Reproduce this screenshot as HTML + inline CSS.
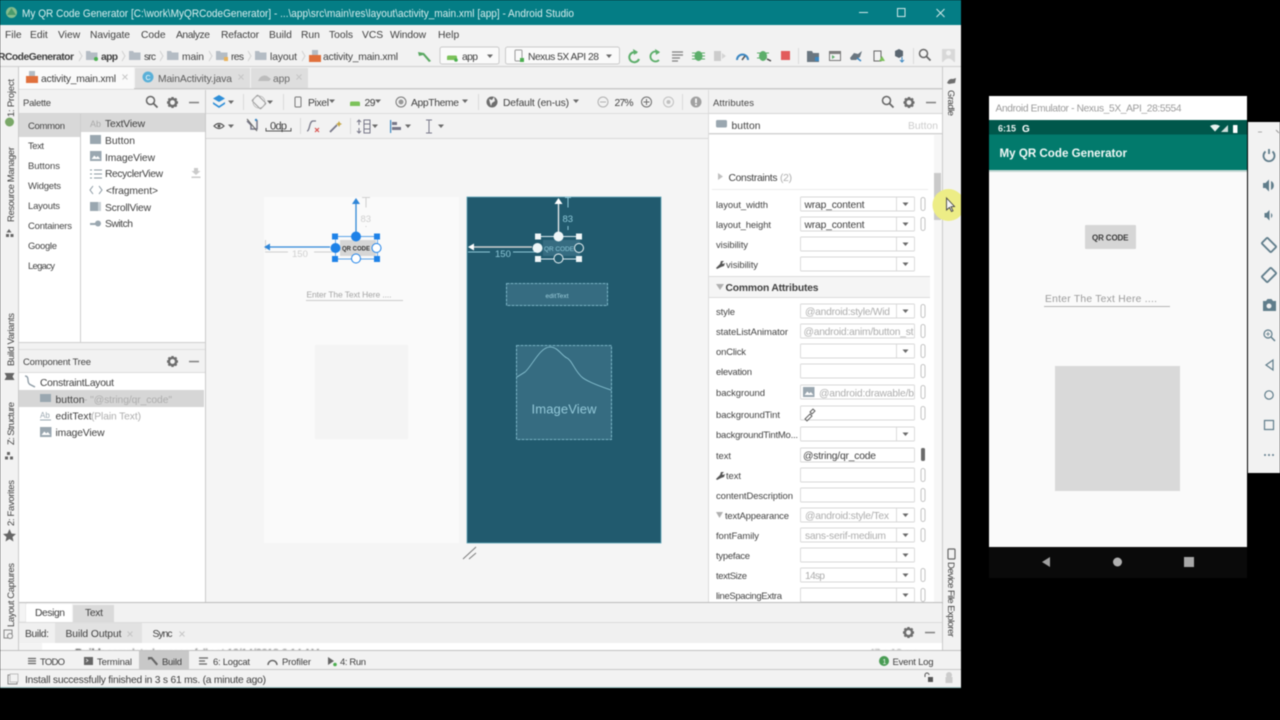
<!DOCTYPE html>
<html><head><meta charset="utf-8"><title>Android Studio</title>
<style>
html,body{margin:0;padding:0;background:#000;width:1280px;height:720px;overflow:hidden}
svg{display:block;position:absolute;left:0;top:0;filter:blur(.4px)}
text{font-family:"Liberation Sans",sans-serif;font-size:10.300px;fill:#3f3f3f}
.g{fill:#adadad}.l{fill:#444;font-size:9.500px}.f{fill:#adadad;font-size:10.300px}
</style></head><body>
<svg width="1280" height="720" viewBox="0 0 1280 720" xmlns="http://www.w3.org/2000/svg">
<defs>
<clipPath id="ideclip"><rect x="0" y="0" width="961" height="688"/></clipPath>
<g id="gear"><circle cx="0" cy="0" r="3.600" fill="none" stroke="#6e6e6e" stroke-width="2.400"/><path d="M-1.200-5.500h2.400v2h-2.400zM-1.200 3.500h2.400v2h-2.400zM-5.500-1.200v2.400h2v-2.400zM3.500-1.200v2.400h2v-2.400zM-4.800-3.200l1.600-1.600 1.500 1.500-1.600 1.600zM3.200-4.800l1.600 1.600-1.500 1.500-1.600-1.600zM-4.800 3.200l1.600 1.600 1.500-1.500-1.600-1.600zM3.200 4.800l1.600-1.600-1.500-1.500-1.600 1.600z" fill="#6e6e6e"/></g>
<g id="mag"><circle cx="-1.500" cy="-1.500" r="4" fill="none" stroke="#666" stroke-width="1.500"/><path d="M1.500 1.500L5.500 5.500" stroke="#666" stroke-width="1.800"/></g>
<g id="min"><rect x="-5" y="-.7" width="10" height="1.500" fill="#808080"/></g>
<g id="fold"><path d="M0 0h4l1 1.500h6.500v7.500H0z" fill="#b4bcc4"/></g>
<g id="img"><rect x="0" y="0" width="11.500" height="10" fill="#9aa7b0"/><path d="M1.500 8l2.800-3.500 2 2 1.500-1.500 2.500 3z" fill="#fff"/></g>
<g id="dd"><path d="M-3-1.500h6l-3 3.500z" fill="#6a6a6a"/></g>
<g id="pill"><rect x="-2" y="-6.500" width="4" height="13" rx="2" fill="#fff" stroke="#b4b4b4" stroke-width=".8"/></g>
<g id="xx"><path d="M-2.500-2.500l5 5M2.500-2.500l-5 5" stroke="#c4c4c4" stroke-width=".9"/></g>
<g id="bot"><path d="M-5 3v-3q0-1.500 1.500-1.500h7q1.500 0 1.500 1.500v3z" fill="#7cc25a"/></g>
</defs>

<!-- IDE base -->
<rect x="0" y="0" width="961" height="688" fill="#f2f2f2"/>
<rect x="0" y="0" width="961" height="25" fill="#047d85"/>
<circle cx="11.500" cy="12.500" r="5.500" fill="#86bd8e"/><path d="M7 15l4.500-7 4.500 7z" fill="#4a9a6c"/>
<text x="22" y="17" style="font-size:10.800px;fill:#d8eeee" textLength="552" lengthAdjust="spacingAndGlyphs">My QR Code Generator [C:\work\MyQRCodeGenerator] - ...\app\src\main\res\layout\activity_main.xml [app] - Android Studio</text>
<path d="M859 12.500h9" stroke="#cfe8e8" stroke-width="1"/><rect x="897.500" y="8.500" width="7.500" height="8" fill="none" stroke="#cfe8e8"/><path d="M936.500 9l8 8M944.500 9l-8 8" stroke="#cfe8e8"/>

<!-- Menu -->
<text x="5" y="38">File</text><text x="30" y="38">Edit</text><text x="58" y="38">View</text><text x="90" y="38" textLength="40">Navigate</text><text x="141" y="38">Code</text><text x="176" y="38" textLength="34">Analyze</text><text x="221" y="38" textLength="38">Refactor</text><text x="269" y="38">Build</text><text x="301" y="38">Run</text><text x="329" y="38">Tools</text><text x="362" y="38">VCS</text><text x="390" y="38" textLength="36">Window</text><text x="438" y="38">Help</text>

<!-- Navbar -->
<rect x="0" y="44" width="961" height="22" fill="#f2f2f2"/>
<rect x="0" y="66" width="961" height="1" fill="#cfcfcf"/>
<text x="-2" y="60" style="font-weight:bold" textLength="76">RCodeGenerator</text>
<path d="M79 51l3 5-3 5" fill="none" stroke="#d0d0d0"/>
<use href="#fold" x="86" y="51"/><circle cx="96" cy="59" r="2" fill="#4caf50"/><text x="101" y="60" style="font-weight:bold" textLength="17">app</text>
<path d="M122 51l3 5-3 5" fill="none" stroke="#d0d0d0"/>
<use href="#fold" x="129" y="51"/><text x="144" y="60" textLength="12">src</text>
<path d="M160 51l3 5-3 5" fill="none" stroke="#d0d0d0"/>
<use href="#fold" x="167" y="51"/><text x="182" y="60" textLength="22">main</text>
<path d="M209 51l3 5-3 5" fill="none" stroke="#d0d0d0"/>
<use href="#fold" x="216" y="51"/><rect x="224" y="57" width="4" height="4" fill="#e8b25c"/><text x="231" y="60" textLength="13">res</text>
<path d="M248 51l3 5-3 5" fill="none" stroke="#d0d0d0"/>
<use href="#fold" x="255" y="51"/><text x="270" y="60" textLength="27">layout</text>
<path d="M302 51l3 5-3 5" fill="none" stroke="#d0d0d0"/>
<rect x="309" y="55" width="12" height="7" fill="#e0703c"/><rect x="312" y="50" width="6" height="5" fill="#b4bcc4"/>
<text x="323" y="60" textLength="75">activity_main.xml</text>
<path d="M418 52l6 1 7 8-2 1-6-7-4 1z" fill="#5aa862"/>
<rect x="440" y="47" width="59" height="17" rx="2" fill="#fafafa" stroke="#cacaca"/>
<use href="#bot" x="452" y="57"/><circle cx="456" cy="60" r="1.800" fill="#4caf50"/>
<text x="462" y="60" textLength="16">app</text><use href="#dd" x="490" y="56"/>
<rect x="505.500" y="47" width="114" height="17" rx="2" fill="#fafafa" stroke="#cacaca"/>
<rect x="515" y="50" width="7" height="11" rx="1" fill="none" stroke="#999"/><rect x="520" y="58" width="4" height="4" fill="#4caf50"/>
<text x="528" y="60" textLength="71">Nexus 5X API 28</text><use href="#dd" x="609" y="56"/>
<path d="M637 53a5 5 0 1 0 2 6" fill="none" stroke="#5cae6a" stroke-width="2"/><path d="M633 49l5 3-4 3z" fill="#5cae6a"/>
<path d="M659 53a5 5 0 1 0 0 7" fill="none" stroke="#5cae6a" stroke-width="1.800"/><path d="M655 49l5 3-4 3z" fill="#5cae6a"/>
<path d="M672 52h11M672 55h11M672 58h8M672 61h6" stroke="#808080" stroke-width="1.200"/>
<ellipse cx="698.500" cy="56" rx="4" ry="5" fill="#5cae6a"/><path d="M692 53h13M692 56h13M692 59h13" stroke="#5cae6a"/>
<rect x="714" y="51" width="7" height="10" fill="#cccccc"/><path d="M722 53l4 3-4 3z" fill="#d4d4d4"/>
<path d="M737 60a5.500 5.500 0 0 1 11 0" fill="none" stroke="#3b87c2" stroke-width="2"/><path d="M742 60l3-4" stroke="#555" stroke-width="1.500"/>
<ellipse cx="763" cy="56" rx="4" ry="5" fill="#5cae6a"/><path d="M757 53h12M757 58h10" stroke="#5cae6a"/><path d="M767 59l4 2" stroke="#444" stroke-width="1.500"/>
<rect x="781" y="51" width="9" height="9" fill="#e25c5c"/>
<rect x="798" y="48" width="1" height="16" fill="#dadada"/>
<path d="M807 51h5l1 2h6v9h-12z" fill="#6a7680"/><rect x="815" y="57" width="4" height="4" fill="#3b87c2"/>
<rect x="829.500" y="51.500" width="11" height="9" fill="none" stroke="#777"/><rect x="830" y="52" width="10" height="2" fill="#808080"/><path d="M832 55l3 2-3 2z" fill="#5cae6a"/>
<path d="M850 58l4-5 4 1 4-3-2 6-4 3h-5z" fill="#6a7680"/><path d="M857 58l4 3" stroke="#3b87c2" stroke-width="1.500"/>
<rect x="874" y="51" width="7" height="10" fill="none" stroke="#666"/><path d="M877 62l3-5 3 5z" fill="#7cc25a" transform="translate(2,-1)"/>
<path d="M895 51l4-2 4 2v5l-4 2-4-2z" fill="#5a6670"/><path d="M902 57v5m-2-2l2 2 2-2" stroke="#3b87c2" fill="none"/>
<rect x="913" y="48" width="1" height="16" fill="#dadada"/>
<use href="#mag" x="925" y="55"/>
<rect x="942" y="49" width="13" height="13" fill="#d8d8d8"/><circle cx="948.500" cy="53" r="2.500" fill="#f2f2f2"/><path d="M943 62q5.500-7 11 0z" fill="#f2f2f2"/>

<!-- Left strip -->
<rect x="18" y="67" width="1" height="584" fill="#cacaca"/>
<text transform="translate(14,117) rotate(-90)" style="font-size:9.500px" textLength="38">1: Project</text>
<circle cx="9.500" cy="122" r="4.500" fill="#7aa868"/>
<text transform="translate(14,222) rotate(-90)" style="font-size:9.500px" textLength="75">Resource Manager</text>
<path d="M9 229l2.500 3.500h-5zM6 234h3v3H6zM10.500 234h3v3h-3z" fill="#666"/>
<text transform="translate(14,366) rotate(-90)" style="font-size:9.500px" textLength="53">Build Variants</text>
<path d="M4.500 373h10l-2 3.500 2 3.500h-10l2-3.500z" fill="#666"/>
<text transform="translate(14,445) rotate(-90)" style="font-size:9.500px" textLength="43">Z: Structure</text>
<path d="M7 452h3v3H7zM5 456.500h3v3H5zM10 456.500h3v3h-3z" fill="#666"/>
<text transform="translate(14,526) rotate(-90)" style="font-size:9.500px" textLength="46">2: Favorites</text>
<path d="M9.500 529l2 4.500 4.500.5-3.500 3 1 4.500-4-2.500-4 2.500 1-4.500-3.500-3 4.500-.5z" fill="#666"/>
<text transform="translate(14,627) rotate(-90)" style="font-size:9.500px" textLength="64">Layout Captures</text>
<rect x="4" y="630" width="8" height="8" fill="none" stroke="#888"/><circle cx="10" cy="636" r="2.500" fill="#f2f2f2" stroke="#888"/>

<!-- Tabs -->
<rect x="19" y="67" width="924" height="21" fill="#f2f2f2"/>
<rect x="135" y="68" width="115" height="20" fill="#dedede"/>
<rect x="251" y="68" width="57" height="20" fill="#dedede"/>
<rect x="19" y="88" width="924" height="1.500" fill="#cacaca"/>
<rect x="19" y="67" width="115" height="22" fill="#fafafa"/>
<rect x="26" y="76" width="12" height="7" fill="#e0703c"/><rect x="29" y="71" width="6" height="5" fill="#b4bcc4"/>
<text x="41" y="82" textLength="75">activity_main.xml</text><use href="#xx" x="125" y="77"/>
<circle cx="148" cy="77" r="5.500" fill="#5ab0d8"/><text x="145.500" y="80" style="font-size:7px;fill:#fff">C</text>
<text x="158" y="82" style="fill:#5a5a5a" textLength="74">MainActivity.java</text><use href="#xx" x="241" y="77"/>
<path d="M258 81q3-7 9-5l4 3-2 2z" fill="#bcbcbc"/><text x="273" y="82" style="fill:#6a6a6a" textLength="17">app</text><use href="#xx" x="299" y="77"/>

<!-- Palette -->
<rect x="19" y="90" width="186" height="24" fill="#f2f2f2"/>
<rect x="19" y="113" width="186" height="1" fill="#d4d4d4"/>
<rect x="19" y="114" width="186" height="228" fill="#fff"/>
<rect x="19" y="114" width="61" height="23" fill="#d8d8d8"/>
<rect x="81" y="114" width="124" height="18" fill="#d8d8d8"/>
<rect x="80" y="114" width="1" height="228" fill="#cecece"/>
<rect x="205" y="90" width="1" height="512" fill="#cacaca"/>
<text x="23" y="106" class="l" textLength="28">Palette</text>
<use href="#mag" x="152" y="102"/><use href="#gear" x="172.500" y="102.500"/><use href="#min" x="194" y="102.500"/>
<text x="28" y="129" class="l" textLength="37">Common</text>
<text x="28" y="149" class="l" textLength="16">Text</text>
<text x="28" y="169" class="l" textLength="32">Buttons</text>
<text x="28" y="189" class="l" textLength="33">Widgets</text>
<text x="28" y="209" class="l" textLength="32">Layouts</text>
<text x="28" y="229" class="l" textLength="44">Containers</text>
<text x="28" y="249" class="l" textLength="29">Google</text>
<text x="28" y="269" class="l" textLength="27">Legacy</text>
<text x="90" y="127" style="font-size:9px;fill:#aaa">Ab</text><text x="105" y="127" textLength="40">TextView</text>
<rect x="90" y="135" width="11" height="9" fill="#9aa7b0"/><text x="105" y="144" textLength="30">Button</text>
<use href="#img" x="90" y="151"/><text x="105" y="161" textLength="50">ImageView</text>
<path d="M90 170h2M90 174h2M90 178h2M94 170h8M94 174h8M94 178h8" stroke="#8a98a2"/><text x="105" y="177" textLength="58">RecyclerView</text>
<path d="M93 186l-3 4 3 4M99 186l3 4-3 4" fill="none" stroke="#8a98a2"/><text x="106" y="194" textLength="52">&lt;fragment&gt;</text>
<rect x="90" y="202" width="11" height="9" fill="#9aa7b0"/><rect x="98" y="202" width="3" height="9" fill="#c8d0d6"/><text x="105" y="211" textLength="46">ScrollView</text>
<path d="M90 224h8" stroke="#9aa7b0" stroke-width="2"/><circle cx="98" cy="223.500" r="3" fill="#9aa7b0"/><text x="105" y="227" textLength="28">Switch</text>
<path d="M194 168h4v3h2.500l-4.500 4-4.500-4h2.500zM191.500 176.500h9v1.500h-9z" fill="#cacaca"/>

<!-- Component tree -->
<rect x="19" y="342" width="186" height="1" fill="#cecece"/>
<rect x="19" y="343" width="186" height="6" fill="#f2f2f2"/>
<rect x="19" y="349" width="186" height="1" fill="#e0e0e0"/>
<rect x="19" y="350" width="186" height="22" fill="#f2f2f2"/>
<rect x="19" y="372" width="186" height="1" fill="#dcdcdc"/>
<rect x="19" y="373" width="186" height="229" fill="#fff"/>
<text x="23" y="365" class="l" textLength="68">Component Tree</text>
<use href="#gear" x="172.500" y="361.500"/><use href="#min" x="194" y="361.500"/>
<path d="M25 376q3 0 3 4t3 5q2 1 4 2" fill="none" stroke="#8a98a2" stroke-width="1.300"/>
<text x="40" y="386" textLength="74">ConstraintLayout</text>
<rect x="19" y="390" width="185" height="17" fill="#d6d6d6"/>
<rect x="40" y="394" width="11" height="8" fill="#9aa7b0"/>
<text x="55.500" y="403" textLength="29">button</text><text x="84" y="403" class="g" textLength="88">- "@string/qr_code"</text>
<text x="40" y="418" style="font-size:8px;fill:#9aa7b0">Ab</text><path d="M40 420h11" stroke="#9aa7b0"/>
<text x="55.500" y="419.500" textLength="36">editText</text><text x="91" y="419.500" class="g" textLength="50">(Plain Text)</text>
<use href="#img" x="40" y="427"/><text x="55.500" y="436" textLength="49">imageView</text>

<!-- Canvas -->
<rect x="206" y="90" width="503" height="512" fill="#f5f5f5"/>
<rect x="206" y="90" width="503" height="48" fill="#f2f2f2"/>
<rect x="206" y="113" width="503" height="1" fill="#dcdcdc"/>
<rect x="206" y="138" width="503" height="1" fill="#d8d8d8"/>
<path d="M219 95l6 3.500-6 3.500-6-3.500z" fill="#2f8fd8"/><path d="M213 102l6 4 6-4v2l-6 4-6-4z" fill="#2f8fd8"/>
<use href="#dd" x="231" y="102"/>
<rect x="243" y="94" width="1" height="16" fill="#dadada"/>
<g transform="rotate(-45 259 102)"><rect x="255" y="96" width="8" height="12" rx="1" fill="none" stroke="#999"/></g><circle cx="259" cy="102" r="6" fill="none" stroke="#b0b0b0" stroke-width=".7"/>
<use href="#dd" x="270" y="102"/>
<rect x="283" y="94" width="1" height="16" fill="#dadada"/>
<rect x="295" y="97" width="6" height="10" rx="1" fill="none" stroke="#777"/>
<text x="308" y="106" textLength="21">Pixel</text><use href="#dd" x="332" y="101"/>
<use href="#bot" x="355" y="103"/>
<text x="364.500" y="106" textLength="11">29</text><use href="#dd" x="378" y="101"/>
<circle cx="401" cy="102" r="5" fill="none" stroke="#777"/><circle cx="401" cy="102" r="2.500" fill="#999"/>
<text x="411" y="106" textLength="48">AppTheme</text><use href="#dd" x="465" y="101"/>
<rect x="478" y="94" width="1" height="16" fill="#dadada"/>
<circle cx="492" cy="102" r="5.500" fill="#6e6e6e"/><path d="M489 99l3 1 2-3 1 4-3 2-1 3-1-3z" fill="#eee"/>
<text x="503" y="106" textLength="66">Default (en-us)</text><use href="#dd" x="576" y="101"/>
<circle cx="603" cy="102" r="5" fill="none" stroke="#b0b0b0"/><path d="M600 102h6" stroke="#b0b0b0"/>
<text x="614.500" y="106" textLength="19">27%</text>
<circle cx="646.500" cy="102" r="5" fill="none" stroke="#6e6e6e"/><path d="M643.500 102h6M646.500 99v6" stroke="#6e6e6e"/>
<circle cx="668.500" cy="102" r="5" fill="none" stroke="#c0c0c0"/><circle cx="668.500" cy="102" r="2" fill="#c0c0c0"/>
<rect x="682" y="94" width="1" height="16" fill="#dadada"/>
<circle cx="696" cy="102" r="5.500" fill="#a0a0a0"/><rect x="695.200" y="98.500" width="1.600" height="4.500" fill="#fff"/><rect x="695.200" y="104" width="1.600" height="1.500" fill="#fff"/>
<!-- row 2 -->
<path d="M214 126q5-5 10 0q-5 5-10 0z" fill="none" stroke="#555" stroke-width="1.200"/><circle cx="219" cy="126" r="1.500" fill="#555"/>
<use href="#dd" x="231" y="126"/>
<path d="M247 121l4 4v4h6v-9" fill="none" stroke="#778" stroke-width="1.500"/><path d="M247 119l10 12" stroke="#666"/><circle cx="256" cy="120" r="1.200" fill="#3b87c2"/>
<path d="M266 128v3h25v-3" fill="none" stroke="#555"/><text x="270" y="129.500" style="font-size:11px" textLength="17">0dp</text>
<rect x="300" y="118" width="1" height="16" fill="#dadada"/>
<path d="M307 131c3 0 2-10 6-10h3" fill="none" stroke="#778" stroke-width="1.300"/><path d="M315 128l4 4M319 128l-4 4" stroke="#d9534f" stroke-width="1.200"/>
<path d="M330 132l7-7" stroke="#778" stroke-width="1.800"/><path d="M339 121l1 2 2 1-2 1-1 2-1-2-2-1 2-1z" fill="#c4a646"/>
<rect x="350" y="118" width="1" height="16" fill="#dadada"/>
<path d="M359 120v5M359 128v5M357 122l2-2 2 2M357 131l2 2 2-2" fill="none" stroke="#778"/><rect x="364" y="120" width="6" height="13" fill="none" stroke="#778"/><path d="M364 124h6M364 129h6" stroke="#778"/><use href="#dd" x="375" y="126"/>
<rect x="390" y="120" width="1.200" height="13" fill="#3b87c2"/><rect x="392" y="122" width="5" height="3" fill="#778"/><rect x="392" y="127" width="9" height="3" fill="#778"/><use href="#dd" x="408" y="126"/>
<path d="M426 120h6M426 133h6M429 120v13" stroke="#778"/><use href="#dd" x="441" y="126"/>

<!-- Light design surface -->
<rect x="264" y="197" width="195" height="346" fill="#fafafa"/>
<rect x="265" y="240" width="1" height="10" fill="#d0d0d0"/>
<rect x="315" y="345" width="93" height="94" fill="#f4f4f4"/>
<text x="306.500" y="297.500" style="font-size:8.500px;fill:#a4a4a4" textLength="85">Enter The Text Here ....</text>
<rect x="306" y="300" width="97" height="1" fill="#cccccc"/>
<rect x="340" y="240" width="36" height="16" fill="#d6d6d6"/>
<text x="342" y="250.500" style="font-size:6px;font-weight:bold;fill:#333" textLength="28">QR CODE</text>
<path d="M356 232V202" stroke="#2f86d8" stroke-width="1.300"/><path d="M352 204l4-6 4 6z" fill="#2f86d8"/>
<path d="M330 247H268" stroke="#2f86d8" stroke-width="1.300"/><path d="M270 243.500l-6 3.500 6 3.500z" fill="#2f86d8"/>
<path d="M362 197.500h8M366 197.500v10M366 227v-1" stroke="#d0d0d0" fill="none"/>
<text x="360.500" y="222" style="font-size:9.500px;fill:#cfcfcf">83</text>
<path d="M265 252h23M314 252h19" stroke="#d0d0d0"/>
<text x="292" y="257" style="font-size:9.500px;fill:#cfcfcf">150</text>
<path d="M335 236.500h45M335 259h45M377.500 236v23M335.500 236v23" stroke="#5aa2e8" stroke-width=".9" fill="none"/>
<g fill="#1e82e8"><rect x="332" y="233.500" width="6" height="6"/><rect x="374" y="233.500" width="6" height="6"/><rect x="332" y="256" width="6" height="6"/><rect x="374" y="256" width="6" height="6"/></g>
<circle cx="356" cy="236.500" r="5" fill="#1e82e8"/><circle cx="335.500" cy="248" r="5" fill="#1e82e8"/>
<circle cx="376.500" cy="248" r="4.500" fill="#fff" stroke="#1e82e8"/><circle cx="356" cy="258.500" r="4.500" fill="#fff" stroke="#1e82e8"/>

<!-- Blueprint -->
<rect x="467" y="197" width="194" height="346" fill="#215a6e" stroke="#5fa5b8" stroke-width=".8"/>
<rect x="506.500" y="283.500" width="101" height="22" fill="#366c81" stroke="#8ec8d8" stroke-width=".8" stroke-dasharray="3 1"/>
<text x="545.500" y="298" style="font-size:6.500px;fill:#9fd0de" textLength="23">editText</text>
<rect x="516.500" y="345.500" width="95" height="94" fill="#366c81" stroke="#8ec8d8" stroke-width=".8" stroke-dasharray="3 1"/>
<path d="M517 377L525 372C532 366 540 347 550 347C558 347 562 356 567 358C572 360 575 372 583 378C590 383 602 387 611 390" fill="none" stroke="#8ec8d8" stroke-width=".8"/>
<text x="531.500" y="413.500" style="font-size:13px;fill:#93c8d8" textLength="65">ImageView</text>
<rect x="543" y="240" width="37" height="16" fill="#366c81"/>
<text x="544" y="251" style="font-size:6.500px;fill:#8ec8d8" textLength="30">QR CODE</text>
<path d="M558.500 232V204" stroke="#f0f0f0" stroke-width="1.300"/><path d="M554.500 204l4-6 4 6z" fill="#fff"/>
<path d="M532 247H473" stroke="#cfcfcf" stroke-width="1.500"/><path d="M474 243.500l-6 3.500 6 3.500z" fill="#fff"/>
<path d="M565 197.500h6M568 197.500v10M568 226v4" stroke="#8ec8d8" fill="none"/>
<text x="562.500" y="222" style="font-size:9.500px;fill:#8ec8d8">83</text>
<path d="M468 252h22M513 252h24" stroke="#8ec8d8"/>
<text x="495" y="257" style="font-size:9.500px;fill:#8ec8d8">150</text>
<path d="M537 236.500h43M537 259h43" stroke="#d8e8ee" fill="none"/>
<g fill="#f0f6f8"><rect x="535" y="233.500" width="6" height="6"/><rect x="576" y="233.500" width="6" height="6"/><rect x="535" y="256" width="6" height="6"/><rect x="576" y="256" width="6" height="6"/></g>
<circle cx="558.500" cy="236.500" r="5" fill="#eef6f8"/><circle cx="537.500" cy="248" r="5" fill="#eef6f8"/>
<circle cx="579" cy="248" r="4.500" fill="#215a6e" stroke="#eef6f8"/><circle cx="558.500" cy="258.500" r="4.500" fill="#215a6e" stroke="#eef6f8"/>
<path d="M463 559l13-12M469 559l7-6" stroke="#777" stroke-width=".9"/>

<!-- Attributes -->
<rect x="709" y="90" width="234" height="512" fill="#fff"/>
<rect x="709" y="90" width="234" height="23" fill="#f2f2f2"/>
<rect x="708" y="90" width="1" height="512" fill="#dcdcdc"/>
<rect x="709" y="113" width="234" height="1" fill="#d4d4d4"/>
<rect x="709" y="133" width="234" height="1.500" fill="#d4d4d4"/>
<rect x="942" y="67" width="1" height="584" fill="#cacaca"/>
<text x="713" y="106" class="l" textLength="41">Attributes</text>
<use href="#mag" x="888" y="102"/><use href="#gear" x="909" y="102.500"/><use href="#min" x="931" y="102.500"/>
<rect x="716" y="120" width="11" height="7.500" rx="1.500" fill="#9aa7b0"/>
<text x="731.500" y="129" textLength="29">button</text><text x="908" y="129" style="fill:#cccccc" textLength="30">Button</text>
<rect x="934" y="135" width="8" height="467" fill="#f6f6f6"/><rect x="934" y="173" width="7" height="47" fill="#cacaca"/>
<path d="M718 173l5 3.500-5 3.500z" fill="#c0c0c0"/><text x="728.500" y="181" textLength="49">Constraints</text><text x="780" y="181" class="g" textLength="12">(2)</text>
<rect x="712" y="189" width="216" height="1" fill="#ececec"/>
<rect x="709" y="276" width="221" height="1" fill="#dcdcdc"/>
<rect x="709" y="277" width="221" height="20" fill="#f5f5f5"/>
<rect x="709" y="297" width="221" height="1" fill="#dcdcdc"/>
<path d="M716 284h8l-4 6z" fill="#b0b0b0"/><text x="725.500" y="291" style="font-weight:bold;font-size:10.300px" textLength="93">Common Attributes</text>

<!-- Fields -->
<g fill="#fff" stroke="#d8d8d8" stroke-width=".9">
<rect x="800.500" y="197" width="114" height="14" rx="1"/><rect x="800.500" y="217" width="114" height="14" rx="1"/><rect x="800.500" y="237" width="114" height="14" rx="1"/><rect x="800.500" y="257" width="114" height="14" rx="1"/>
<rect x="800.500" y="304" width="114" height="14" rx="1"/><rect x="800.500" y="324" width="114" height="14" rx="1"/><rect x="800.500" y="344" width="114" height="14" rx="1"/><rect x="800.500" y="364" width="114" height="14" rx="1"/>
<rect x="800.500" y="385" width="114" height="14" rx="1"/><rect x="800.500" y="406" width="114" height="14" rx="1"/><rect x="800.500" y="427" width="114" height="14" rx="1"/><rect x="800.500" y="448" width="114" height="14" rx="1"/>
<rect x="800.500" y="468" width="114" height="14" rx="1"/><rect x="800.500" y="488" width="114" height="14" rx="1"/><rect x="800.500" y="508" width="114" height="14" rx="1"/><rect x="800.500" y="528" width="114" height="14" rx="1"/>
<rect x="800.500" y="548" width="114" height="14" rx="1"/><rect x="800.500" y="568" width="114" height="14" rx="1"/><rect x="800.500" y="588" width="114" height="14" rx="1"/>
</g>
<g stroke="#d8d8d8" stroke-width=".9">
<path d="M896.500 197v14M896.500 217v14M896.500 237v14M896.500 257v14M896.500 304v14M896.500 344v14M896.500 427v14M896.500 508v14M896.500 528v14M896.500 548v14M896.500 568v14M896.500 588v14"/>
</g>
<use href="#dd" x="905.500" y="204"/><use href="#dd" x="905.500" y="224"/><use href="#dd" x="905.500" y="244"/><use href="#dd" x="905.500" y="264"/><use href="#dd" x="905.500" y="311"/><use href="#dd" x="905.500" y="351"/><use href="#dd" x="905.500" y="434"/><use href="#dd" x="905.500" y="515"/><use href="#dd" x="905.500" y="535"/><use href="#dd" x="905.500" y="555"/><use href="#dd" x="905.500" y="575"/><use href="#dd" x="905.500" y="595"/>
<use href="#pill" x="923" y="204"/><use href="#pill" x="923" y="224"/><use href="#pill" x="923" y="311"/><use href="#pill" x="923" y="331"/><use href="#pill" x="923" y="351"/><use href="#pill" x="923" y="371"/><use href="#pill" x="923" y="392"/><use href="#pill" x="923" y="413"/>
<rect x="921" y="448" width="4" height="13" rx="1.500" fill="#6a6a6a"/>
<use href="#pill" x="923" y="475"/><use href="#pill" x="923" y="495"/><use href="#pill" x="923" y="515"/><use href="#pill" x="923" y="535"/><use href="#pill" x="923" y="575"/><use href="#pill" x="923" y="595"/>

<text x="716" y="208" class="l" textLength="52">layout_width</text>
<text x="716" y="228" class="l" textLength="55">layout_height</text>
<text x="716" y="248" class="l" textLength="32">visibility</text>
<path d="M716 268l4-4 1-3h3l-2 2 1 1 2-1-1 3-3 1-4 2z" fill="#555"/><text x="726" y="268" class="l" textLength="32">visibility</text>
<text x="716" y="315" class="l" textLength="19">style</text>
<text x="716" y="335" class="l" textLength="72">stateListAnimator</text>
<text x="716" y="355" class="l" textLength="30">onClick</text>
<text x="716" y="375" class="l" textLength="36">elevation</text>
<text x="716" y="396" class="l" textLength="49">background</text>
<text x="716" y="418" class="l" textLength="64">backgroundTint</text>
<text x="716" y="438" class="l" textLength="82">backgroundTintMo...</text>
<text x="716" y="459" class="l" textLength="15">text</text>
<path d="M716 479l4-4 1-3h3l-2 2 1 1 2-1-1 3-3 1-4 2z" fill="#555"/><text x="726" y="479" class="l" textLength="15">text</text>
<text x="716" y="499" class="l" textLength="77">contentDescription</text>
<path d="M716 512h7l-3.500 6z" fill="#b0b0b0"/><text x="725" y="519" class="l" textLength="64">textAppearance</text>
<text x="716" y="539" class="l" textLength="43">fontFamily</text>
<text x="716" y="559" class="l" textLength="34">typeface</text>
<text x="716" y="579" class="l" textLength="31">textSize</text>
<text x="716" y="599" class="l" textLength="66">lineSpacingExtra</text>

<text x="804.500" y="208" textLength="60">wrap_content</text>
<text x="804.500" y="228" textLength="60">wrap_content</text>
<text x="805" y="315" class="f" textLength="85">@android:style/Wid</text>
<text x="803.500" y="335" class="f" textLength="110">@android:anim/button_st</text>
<use href="#img" x="803" y="387"/>
<text x="819" y="396.500" class="f" textLength="95">@android:drawable/b</text>
<path d="M805 419l5-5 2 2-5 5zM810 412l3-3 2 2-3 3z" fill="none" stroke="#555" stroke-width=".9"/>
<text x="803" y="459" textLength="73">@string/qr_code</text>
<text x="805" y="519" class="f" textLength="84">@android:style/Tex</text>
<text x="805" y="539" class="f" textLength="81">sans-serif-medium</text>
<text x="805" y="579" class="f" textLength="20">14sp</text>

<!-- Right strip -->
<path d="M947 83q2-5 6-4l3-1-1 5-6 1z" fill="#6e6e6e"/>
<text transform="translate(948,90) rotate(90)" style="font-size:9.500px" textLength="26">Gradle</text>
<rect x="948" y="549" width="7" height="10" rx="1" fill="none" stroke="#666" stroke-width="1.200"/>
<text transform="translate(948,562) rotate(90)" style="font-size:9.500px" textLength="75">Device File Explorer</text>

<!-- Cursor highlight -->
<g clip-path="url(#ideclip)"><circle cx="948.500" cy="205" r="16" fill="#eded86"/></g>
<path d="M946.500 198v12l3-2.500 2 4 1.500-.7-2-4 3.500-.3z" fill="#f4f4f4" stroke="#444" stroke-width=".9"/>

<!-- Bottom tabs -->
<rect x="19" y="602" width="924" height="1.500" fill="#bcbcbc"/>
<rect x="19" y="603" width="923" height="20" fill="#f2f2f2"/>
<rect x="19" y="603" width="7" height="19" fill="#f4f4f4" stroke="#d4d4d4" stroke-width=".6"/>
<rect x="26" y="604" width="46" height="19" fill="#fff"/>
<rect x="73" y="605" width="41" height="17" fill="#dadada"/>
<text x="35" y="616" textLength="30">Design</text><text x="85" y="616" textLength="18">Text</text>
<rect x="19" y="622" width="923" height="1" fill="#dcdcdc"/>
<rect x="19" y="623" width="923" height="20" fill="#f0f0f0"/>
<rect x="55" y="623" width="87" height="20" fill="#e2e2e2"/>
<text x="25" y="637" textLength="24">Build:</text><text x="65.500" y="637" textLength="56">Build Output</text><use href="#xx" x="130" y="634"/>
<text x="152.500" y="637" textLength="20">Sync</text><use href="#xx" x="182" y="634"/>
<use href="#gear" x="908.500" y="632.500"/><use href="#min" x="930" y="632.500"/>
<rect x="19" y="643" width="923" height="8" fill="#fff"/>
<rect x="19" y="643" width="23" height="8" fill="#f4f4f4"/>
<svg x="19" y="643" width="923" height="8" overflow="hidden"><text x="56" y="13" style="font-size:10.300px;fill:#555"><tspan style="font-weight:bold;fill:#333">Build:</tspan> completed successfully at 12/14/2018 6:14 AM</text><text x="850" y="13" style="font-size:10px;fill:#999">47 s 10 ms</text></svg>
<rect x="0" y="650" width="961" height="1" fill="#c0c0c0"/>
<rect x="0" y="651" width="961" height="19" fill="#f2f2f2"/>
<rect x="139" y="651" width="50" height="19" fill="#c8c8c8"/>
<rect x="0" y="669" width="961" height="1" fill="#c8c8c8"/>
<path d="M28 658.500h8M28 661h8M28 663.500h8" stroke="#666" stroke-width="1.200"/><text x="40" y="665" style="font-size:9.500px" textLength="25">TODO</text>
<rect x="84" y="657" width="9" height="8" fill="#666"/><path d="M86 659l2 1.500-2 1.500" fill="none" stroke="#fff" stroke-width=".7"/><text x="97" y="665" style="font-size:9.500px" textLength="35">Terminal</text>
<path d="M148 657l4 0 6 7-1.500 1.500-5.500-6.500-3 1z" fill="#666"/><text x="162" y="665" style="font-size:9.500px" textLength="20">Build</text>
<path d="M199 658h9M199 661h6M199 664h8" stroke="#666" stroke-width="1.200"/><text x="213" y="665" style="font-size:9.500px" textLength="37">6: Logcat</text>
<path d="M268 665a4.500 4.500 0 0 1 9 0" fill="none" stroke="#666" stroke-width="1.500"/><text x="282" y="665" style="font-size:9.500px" textLength="29">Profiler</text>
<path d="M328 657l6 4-6 4z" fill="#666"/><circle cx="335" cy="664.500" r="1.800" fill="#4caf50"/><text x="340" y="665" style="font-size:9.500px" textLength="26">4: Run</text>
<circle cx="884" cy="661" r="5" fill="#499c54"/><text x="882.500" y="664" style="font-size:7px;fill:#fff">1</text>
<text x="892.500" y="665" style="font-size:9.500px" textLength="41">Event Log</text>

<!-- Status bar -->
<rect x="0" y="670" width="961" height="17.500" fill="#f2f2f2"/>
<rect x="0" y="687" width="961" height="1" fill="#9ec8c8"/>
<rect x="8" y="675" width="9" height="9" fill="none" stroke="#888"/><rect x="10" y="674" width="8" height="8" fill="#f2f2f2" stroke="#aaa" stroke-width=".7"/>
<text x="25" y="683" textLength="241">Install successfully finished in 3 s 61 ms. (a minute ago)</text>
<rect x="928" y="677" width="5" height="5" fill="#555"/><path d="M925 677v-2a2 2 0 0 1 4 0" fill="none" stroke="#555"/>
<circle cx="949" cy="675" r="3" fill="#cccccc"/><rect x="945.500" y="677" width="7" height="6" fill="#cccccc"/>

<!-- Emulator -->
<rect x="989" y="96" width="258" height="24" fill="#fff"/>
<text x="995.500" y="111.500" style="font-size:10.200px;fill:#9a9a9a" textLength="186">Android Emulator - Nexus_5X_API_28:5554</text>
<rect x="989" y="120" width="258" height="14.500" fill="#00574b"/>
<text x="998" y="131.500" style="font-size:9px;fill:#e8f2f0;font-weight:bold">6:15</text>
<text x="1022" y="132" style="font-size:10px;fill:#fff;font-weight:bold">G</text>
<path d="M1210 126q5-3 10 0l-5 5.500z" fill="#e8f2f0"/><path d="M1228 125v7h-7z" fill="#cfe0dc"/><rect x="1233" y="125" width="4.500" height="8" rx=".5" fill="#fff"/>
<rect x="989" y="134.500" width="258" height="35.500" fill="#027a6c"/>
<rect x="989" y="170" width="258" height="2" fill="#c5d8d4"/>
<text x="999.500" y="157" style="font-size:12px;font-weight:bold;fill:#f0f8f6" textLength="127.500" lengthAdjust="spacingAndGlyphs">My QR Code Generator</text>
<rect x="989" y="172" width="258" height="375" fill="#fafafa"/>
<rect x="1085" y="225" width="51" height="24" rx="1" fill="#d6d6d6"/>
<text x="1092" y="240.500" style="font-size:8px;font-weight:bold;fill:#3a3a3a" textLength="36.500">QR CODE</text>
<text x="1045" y="302" style="font-size:10.300px;fill:#9a9a9a" textLength="112">Enter The Text Here ....</text>
<rect x="1044" y="306" width="126" height="1" fill="#b4b4b4"/>
<rect x="1055" y="366" width="125" height="125" fill="#d9d9d9"/>
<rect x="989" y="547" width="258" height="31" fill="#0a0a0a"/>
<path d="M1050 557v10l-8-5z" fill="#a0a0a0"/><circle cx="1117.500" cy="562" r="4.500" fill="#b0b0b0"/><rect x="1184" y="557" width="10" height="10" fill="#a8a8a8"/>

<!-- Emulator side toolbar -->
<rect x="1248" y="122" width="32" height="351" fill="#f2f2f2"/>
<path d="M1258 132h4" stroke="#aaa"/><path d="M1276 130l3 3" stroke="#999"/>
<g transform="translate(1269,155)"><path d="M-3.500-3.500a5.500 5.500 0 1 0 7 0" fill="none" stroke="#607d8b" stroke-width="1.800"/><path d="M0-6v5" stroke="#607d8b" stroke-width="1.800"/></g>
<g fill="#607d8b"><path d="M1263 183h2.500l3.500-3.500v12l-3.500-3.500H1263z"/><path d="M1271 181a5 5 0 0 1 0 9z"/>
<path d="M1264.500 213h2l3-3v10.500l-3-3h-2z"/><path d="M1271 213a3 3 0 0 1 0 5z"/></g>
<g transform="rotate(-45 1269 245)" fill="none" stroke="#607d8b" stroke-width="1.800"><rect x="1265" y="238.500" width="8" height="13" rx="1"/></g>
<g transform="rotate(45 1269 275)" fill="none" stroke="#607d8b" stroke-width="1.800"><rect x="1265" y="268.500" width="8" height="13" rx="1"/></g>
<path d="M1263 301h3l1.500-2h4l1.500 2h3v10h-13z" fill="#607d8b"/><circle cx="1269" cy="306" r="2.500" fill="#f0f0f0"/>
<circle cx="1268" cy="334" r="4" fill="none" stroke="#607d8b" stroke-width="1.200"/><path d="M1271 337l4 4" stroke="#607d8b" stroke-width="1.500"/><path d="M1266 334h4M1268 332v4" stroke="#607d8b" stroke-width=".8"/>
<path d="M1273 360v10l-7-5z" fill="none" stroke="#607d8b" stroke-width="1.200"/>
<circle cx="1269" cy="395" r="4.200" fill="none" stroke="#607d8b" stroke-width="1.200"/>
<rect x="1264.500" y="420.500" width="9" height="9" fill="none" stroke="#607d8b" stroke-width="1.200"/>
<g fill="#607d8b"><circle cx="1265" cy="455" r="1"/><circle cx="1269" cy="455" r="1"/><circle cx="1273" cy="455" r="1"/></g>
</svg>
</body></html>
